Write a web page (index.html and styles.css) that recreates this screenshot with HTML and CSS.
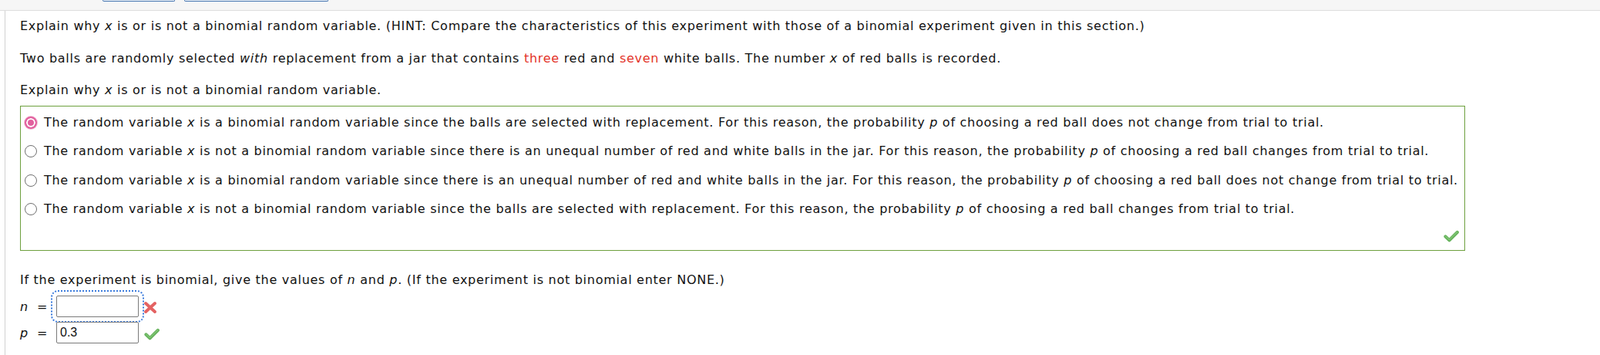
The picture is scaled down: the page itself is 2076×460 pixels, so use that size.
FILE: index.html
```html
<!DOCTYPE html>
<html>
<head>
<meta charset="utf-8">
<link rel="stylesheet" href="styles.css">
</head>
<body>
<div class="topbar">
  <span class="tab tab-a"></span>
  <span class="tab tab-b"></span>
</div>
<div class="main">
  <p class="q">Explain why <i>x</i> is or is not a binomial random variable. (HINT: Compare the characteristics of this experiment with those of a binomial experiment given in this section.)</p>
  <p class="q">Two balls are randomly selected <i>with</i> replacement from a jar that contains <span class="red">three</span> red and <span class="red">seven</span> white balls. The number <i>x</i> of red balls is recorded.</p>
  <p class="q q-last">Explain why <i>x</i> is or is not a binomial random variable.</p>
  <div class="choices">
    <ul class="opts">
      <li><span class="radio on"></span><span class="opt-text">The random variable <i>x</i> is a binomial random variable since the balls are selected with replacement. For this reason, the probability <i>p</i> of choosing a red ball does not change from trial to trial.</span></li>
      <li><span class="radio"></span><span class="opt-text">The random variable <i>x</i> is not a binomial random variable since there is an unequal number of red and white balls in the jar. For this reason, the probability <i>p</i> of choosing a red ball changes from trial to trial.</span></li>
      <li><span class="radio"></span><span class="opt-text">The random variable <i>x</i> is a binomial random variable since there is an unequal number of red and white balls in the jar. For this reason, the probability <i>p</i> of choosing a red ball does not change from trial to trial.</span></li>
      <li><span class="radio"></span><span class="opt-text">The random variable <i>x</i> is not a binomial random variable since the balls are selected with replacement. For this reason, the probability <i>p</i> of choosing a red ball changes from trial to trial.</span></li>
    </ul>
    <div class="mark-row">
      <svg class="check" width="20" height="16" viewBox="0 0 20 16"><path d="M2.5 8.5 L7.5 13.2 L17.8 3" fill="none" stroke="#66b35c" stroke-width="4.2" stroke-linecap="round" stroke-linejoin="round"/><path d="M2.5 8.2 L7.5 12.6 L17.8 2.6" fill="none" stroke="#8fcf82" stroke-width="1.4" stroke-linecap="round" stroke-linejoin="round" opacity="0.6"/></svg>
    </div>
  </div>
  <p class="q2">If the experiment is binomial, give the values of <i>n</i> and <i>p</i>. (If the experiment is not binomial enter NONE.)</p>
  <div class="answers">
    <div class="row">
      <span class="lbl"><i>n</i></span><span class="eq">=</span><input class="field focus" type="text" value="">
      <svg class="xmark" width="18" height="17" viewBox="0 0 18 17"><path d="M3 3 L15 14 M15 3 L3 14" fill="none" stroke="#e46262" stroke-width="4" stroke-linecap="round"/></svg>
    </div>
    <div class="row">
      <span class="lbl"><i>p</i></span><span class="eq">=</span><input class="field" type="text" value="0.3">
      <svg class="check small" width="20" height="16" viewBox="0 0 20 16"><path d="M2.5 8.5 L7.5 13.2 L17.8 3" fill="none" stroke="#66b35c" stroke-width="4.2" stroke-linecap="round" stroke-linejoin="round"/><path d="M2.5 8.2 L7.5 12.6 L17.8 2.6" fill="none" stroke="#8fcf82" stroke-width="1.4" stroke-linecap="round" stroke-linejoin="round" opacity="0.6"/></svg>
    </div>
  </div>
</div>
</body>
</html>
```

FILE: styles.css
```css
html, body {
  margin: 0;
  padding: 0;
  background: #ffffff;
}

body {
  font-family: "DejaVu Sans", Verdana, sans-serif;
  font-size: 16px;
  letter-spacing: 0.72px;
  color: #111111;
}

.topbar {
  height: 13px;
  background: #f6f6f6;
  border-bottom: 1px solid #dedede;
  display: flex;
  align-items: flex-start;
  gap: 12px;
  padding-left: 133px;
}

.tab {
  display: block;
  height: 1px;
  border: 1px solid #3d6fae;
  border-top: none;
  border-radius: 0 0 3px 3px;
  background: #ffffff;
}

.tab-a { width: 92px; }
.tab-b { width: 185px; }

.main {
  margin-left: 6px;
  border-left: 1px solid #d2d2d2;
  padding: 10px 0 20px 19px;
  min-height: 420px;
}

.q {
  margin: 0 0 21.5px 0;
  line-height: 20px;
  white-space: nowrap;
}

.q-last {
  margin-bottom: 10px;
}

.red {
  color: #e3342a;
}

.choices {
  width: 1875px;
  box-sizing: border-box;
  border: 1px solid #6ea03e;
  padding: 10.5px 7px 9px 5px;
}

.opts {
  list-style: none;
  margin: 0;
  padding: 0;
  display: flex;
  flex-direction: column;
  gap: 17.5px;
}

.opts li {
  display: flex;
  align-items: center;
  line-height: 20px;
  white-space: nowrap;
}

.radio {
  flex: none;
  width: 16px;
  height: 16px;
  box-sizing: border-box;
  border: 1px solid #707070;
  border-radius: 50%;
  background: #ffffff;
  margin-right: 9px;
}

.radio.on {
  border: 2px solid #e2609e;
  background: #e2609e;
  box-shadow: inset 0 0 0 2px #ffffff, 0 0 0 1px #f3bcd6;
}

.mark-row {
  margin-top: 17px;
  height: 17px;
  display: flex;
  justify-content: flex-end;
}

.q2 {
  margin: 28px 0 10px 0;
  line-height: 20px;
  white-space: nowrap;
}

.answers {
  display: flex;
  flex-direction: column;
  gap: 6px;
}

.row {
  display: flex;
  align-items: center;
  height: 28px;
}

.lbl {
  width: 22px;
}

.eq {
  width: 25px;
}

.field {
  width: 107px;
  height: 28px;
  box-sizing: border-box;
  border: 1px solid #7a7a7a;
  border-radius: 2px;
  padding: 0 4px;
  margin: 0;
  font-family: "Liberation Sans", Arial, sans-serif;
  font-size: 16px;
  letter-spacing: 0;
  color: #111111;
  background: #ffffff;
}

.field.focus {
  outline: 2px dotted #3b7bdc;
  outline-offset: 5px;
}

.xmark {
  margin-left: 6px;
  margin-top: 3px;
}

.check.small {
  margin-left: 7px;
  margin-top: 3px;
}
```
